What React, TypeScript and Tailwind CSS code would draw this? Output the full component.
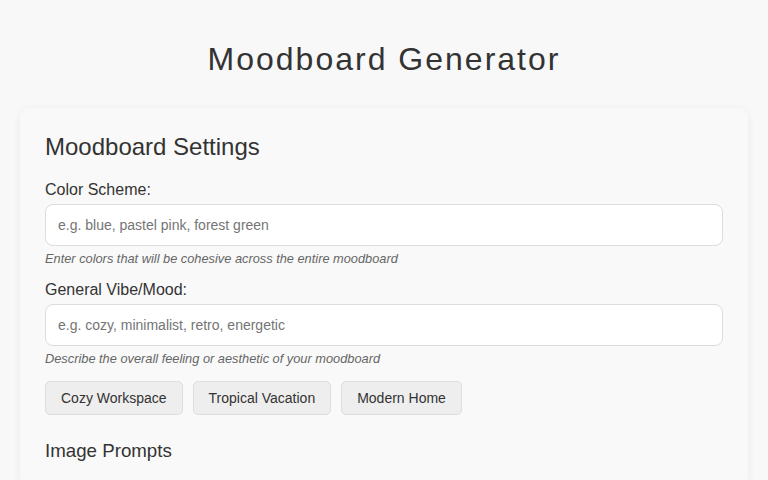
import React, { useState } from 'react';

const presets = ['Cozy Workspace', 'Tropical Vacation', 'Modern Home'];

export default function App() {
  const [colors, setColors] = useState('');
  const [vibe, setVibe] = useState('');

  return (
    <div className="min-h-screen bg-[#f8f8f8] p-5 text-[#333] font-['Liberation_Sans',Arial,sans-serif]">
      <h1 className="mt-[21px] mb-[30px] text-center text-[32px] leading-[37px] font-normal tracking-[2px]">
        Moodboard Generator
      </h1>

      <div className="rounded-[10px] bg-[#f9f9f9] p-[25px] shadow-[0_2px_10px_rgba(0,0,0,0.06)]">
        <h2 className="mb-[20px] text-[24px] leading-[28px]">Moodboard Settings</h2>

        {/* Color scheme */}
        <div className="mb-[15px]">
          <label className="mb-[5px] block text-[16px] leading-[18px]">Color Scheme:</label>
          <input
            type="text"
            value={colors}
            onChange={(e) => setColors(e.target.value)}
            placeholder="e.g. blue, pastel pink, forest green"
            className="block h-[42px] w-full rounded-[8px] border border-[#ddd] bg-white px-3 text-[14px] text-[#333] outline-none placeholder:text-[#757575]"
          />
          <p className="mt-[5px] text-[12.8px] leading-[15px] italic text-[#666]">
            Enter colors that will be cohesive across the entire moodboard
          </p>
        </div>

        {/* Vibe */}
        <div className="mb-[15px]">
          <label className="mb-[5px] block text-[16px] leading-[18px]">General Vibe/Mood:</label>
          <input
            type="text"
            value={vibe}
            onChange={(e) => setVibe(e.target.value)}
            placeholder="e.g. cozy, minimalist, retro, energetic"
            className="block h-[42px] w-full rounded-[8px] border border-[#ddd] bg-white px-3 text-[14px] text-[#333] outline-none placeholder:text-[#757575]"
          />
          <p className="mt-[5px] text-[12.8px] leading-[15px] italic text-[#666]">
            Describe the overall feeling or aesthetic of your moodboard
          </p>
        </div>

        <div className="flex gap-[10px]">
          {presets.map((p) => (
            <button
              key={p}
              className="h-[34px] rounded-[5px] border border-[#ddd] bg-[#eee] px-[15px] text-[14px] text-[#333]"
            >
              {p}
            </button>
          ))}
        </div>

        <h3 className="mt-[25px] text-[18.72px] leading-[22px]">Image Prompts</h3>
      </div>
    </div>
  );
}
